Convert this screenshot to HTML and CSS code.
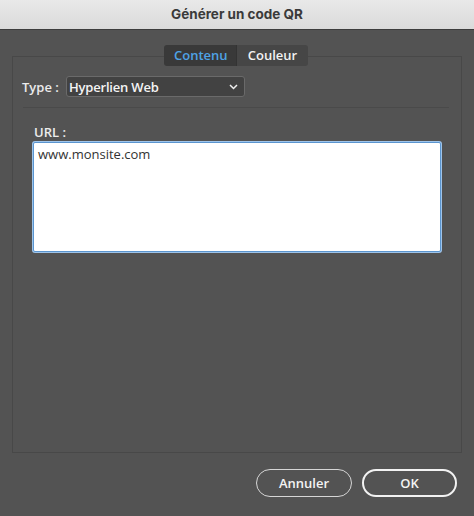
FILE: index.html
```html
<!DOCTYPE html>
<html lang="fr">
<head>
<meta charset="utf-8">
<title>Générer un code QR</title>
<link rel="stylesheet" href="styles.css">
</head>
<body>
<div class="dialog">
  <div class="titlebar">Générer un code QR</div>
  <div class="main">
    <div class="panel">
      <div class="tabs">
        <div class="tab tab-active">Contenu</div>
        <div class="tab">Couleur</div>
      </div>
      <div class="type-row">
        <span class="label">Type :</span>
        <div class="select">
          <span>Hyperlien Web</span>
          <svg class="chevron" width="9" height="6" viewBox="0 0 9 6"><path d="M1 1 L4.5 4.5 L8 1" fill="none" stroke="#f0f0f0" stroke-width="1.5"/></svg>
        </div>
      </div>
      <div class="separator"></div>
      <div class="url-block">
        <div class="label">URL :</div>
        <div class="textarea">www.monsite.com</div>
      </div>
    </div>
    <div class="buttons">
      <button class="btn">Annuler</button>
      <button class="btn btn-default">OK</button>
    </div>
  </div>
</div>
</body>
</html>
```
FILE: styles.css
```css
html, body {
  margin: 0;
  padding: 0;
  background: #535353;
}
body {
  font-family: "Open Sans", "Noto Sans", sans-serif;
  color: #ececec;
  width: 474px;
  height: 516px;
  overflow: hidden;
}
.dialog {
  display: flex;
  flex-direction: column;
  height: 516px;
}
.titlebar {
  height: 30px;
  line-height: 29px;
  text-align: center;
  background: linear-gradient(#e9e9e9, #dadada);
  border-bottom: 1px solid #3c3c3c;
  color: #3a3a3a;
  font-family: "Inter", "Liberation Sans", sans-serif;
  font-weight: 700;
  font-size: 13.5px;
  box-sizing: border-box;
}
.main {
  padding: 26px 12px 0 12px;
  display: flex;
  flex-direction: column;
}
.panel {
  border: 1px solid #484848;
  height: 397px;
  box-sizing: border-box;
  display: flex;
  flex-direction: column;
}
.tabs {
  display: flex;
  align-self: center;
  margin-top: -12px;
  margin-left: -2px;
  height: 21px;
  border-radius: 3px;
  overflow: hidden;
}
.tab {
  font-size: 13px;
  font-weight: 600;
  line-height: 21px;
  background: #464646;
  color: #f2f2f2;
  padding: 0 10px;
  width: 71px;
  box-sizing: border-box;
  text-align: center;
}
.tab-active {
  background: #393939;
  color: #4fa3e6;
  border-right: 1px solid #333;
  width: 73px;
}
.type-row {
  display: flex;
  align-items: center;
  margin-top: 10px;
  padding-left: 9px;
}
.label {
  font-size: 13px;
  font-weight: 600;
  color: #ececec;
}
.type-row .label {
  width: 44px;
}
.select {
  width: 179px;
  height: 21px;
  box-sizing: border-box;
  border: 1px solid #6a6a6a;
  border-radius: 3px;
  background: #424242;
  display: flex;
  align-items: center;
  justify-content: space-between;
  padding: 0 6px 0 2px;
  font-size: 13px;
  font-weight: 600;
  color: #f4f4f4;
  letter-spacing: -0.2px;
}
.chevron {
  display: block;
}
.separator {
  margin: 10px 12px 0 10px;
  height: 1px;
  background: #4a4a4a;
}
.url-block {
  margin: 16px 0 0 20px;
  display: flex;
  flex-direction: column;
}
.url-block .label {
  line-height: 16px;
  margin-bottom: 2px;
  padding-left: 1px;
}
.textarea {
  width: 408px;
  height: 110px;
  box-sizing: border-box;
  background: #fff;
  border: 1px solid #5b95cf;
  box-shadow: 0 0 0 1px #9ec4ea;
  border-radius: 2px;
  color: #333;
  font-size: 13px;
  padding: 2px 4px;
  line-height: 18px;
}
.buttons {
  display: flex;
  justify-content: flex-end;
  gap: 10px;
  margin-top: 16px;
  padding-right: 5px;
}
.btn {
  height: 28px;
  width: 96px;
  border-radius: 14px;
  background: transparent;
  border: 1px solid #d6d6d6;
  color: #f4f4f4;
  font-family: "Open Sans", "Noto Sans", sans-serif;
  font-size: 13px;
  font-weight: 600;
  padding: 0;
}
.btn-default {
  border: 2px solid #f2f2f2;
  width: 95px;
}
```
